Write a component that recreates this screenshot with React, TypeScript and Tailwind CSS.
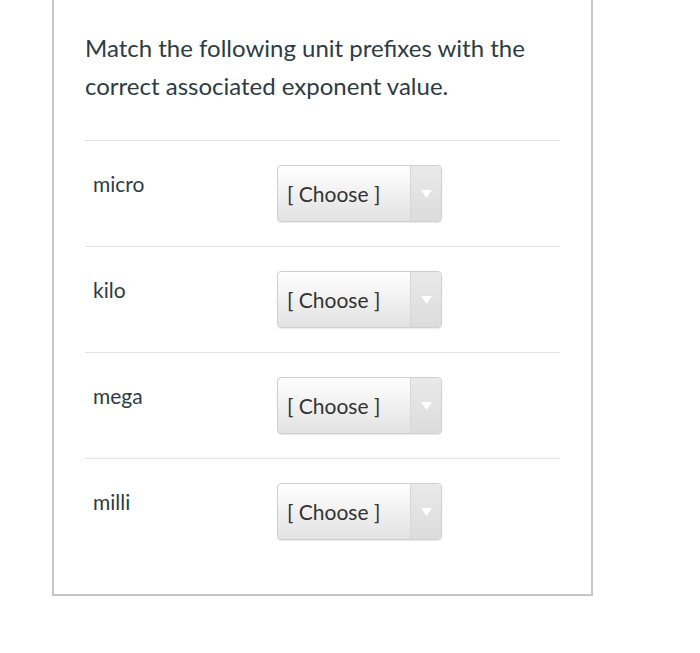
const rows = ['micro', 'kilo', 'mega', 'milli']

function ChooseBox() {
  return (
    <div className="flex h-[57px] w-[165px] items-stretch rounded-[4px] border border-[#cfcfcf] bg-gradient-to-b from-[#ffffff] to-[#e2e2e2] shadow-[0_1px_1px_rgba(0,0,0,0.08)]">
      <div className="flex flex-1 items-center pl-[9px] text-[21px] text-[#333]">[ Choose ]</div>
      <div className="flex w-[31px] items-center justify-center border-l border-[#d6d6d6] bg-gradient-to-b from-[#e9e9e9] to-[#dcdcdc] rounded-r-[4px]">
        <svg width="11" height="8" viewBox="0 0 11 8">
          <path d="M0 0 H11 L5.5 8 Z" fill="#fff" />
        </svg>
      </div>
    </div>
  )
}

export default function App() {
  return (
    <div className="min-h-[653px] w-[700px] bg-white font-['Lato',sans-serif]">
      <div className="ml-[52px] w-[541px] border-2 border-t-0 border-[#c6c6c6] px-[31px] pt-[29px] pb-[30px]">
        <p className="text-[24px] leading-[38px] text-[#2d3b45]">
          Match the following unit prefixes with the
          <br />
          correct associated exponent value.
        </p>
        <div className="mt-[35px]">
          {rows.map(label => (
            <div key={label} className="flex border-t border-[#e2e2e2] py-[24px] pl-[8px]">
              <div className="w-[184px] pt-[5px] text-[21px] leading-[28px] text-[#2d3b45]">{label}</div>
              <ChooseBox />
            </div>
          ))}
        </div>
      </div>
    </div>
  )
}
